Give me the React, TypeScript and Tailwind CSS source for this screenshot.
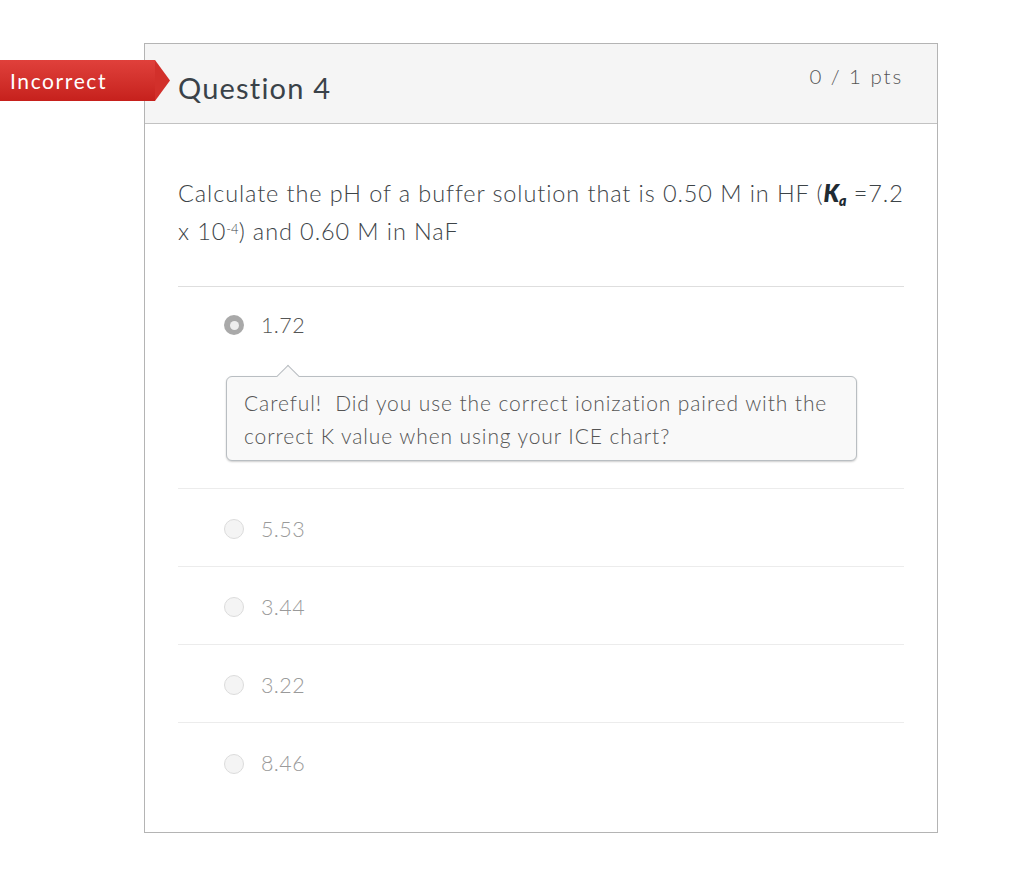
import React from 'react';

const answers = ['5.53', '3.44', '3.22', '8.46'];

const Radio = ({ selected }: { selected?: boolean }) =>
  selected ? (
    <span className="w-[20px] h-[20px] rounded-full bg-[#a9a9a9] flex items-center justify-center shrink-0">
      <span className="w-[9px] h-[9px] rounded-full bg-[#eeeeee]" />
    </span>
  ) : (
    <span className="w-[20px] h-[20px] rounded-full border border-[#dcdcdc] bg-[#f4f4f4] shrink-0" />
  );

export default function App() {
  return (
    <div className="relative w-[1024px] h-[872px] bg-white font-['Lato',sans-serif] text-[#2d3b45]">
      {/* incorrect badge */}
      <div className="absolute left-0 top-[60px] h-[41px] flex">
        <div className="w-[155px] h-full bg-gradient-to-b from-[#e0403b] to-[#c6201c] flex items-center pl-[10px] text-white text-[21px] tracking-[1.6px]">
          Incorrect
        </div>
        <svg width="16" height="41" viewBox="0 0 16 41">
          <polygon points="0,0 15,20.5 0,41" fill="#d2302b" />
        </svg>
      </div>

      <div className="pl-[144px] pt-[43px]">
        <div className="w-[794px] h-[790px] border border-[#b4b4b4]">
          <div className="h-[80px] bg-[#f5f5f5] border-b border-[#c2c2c2] flex justify-between pl-[33px] pr-[34px]">
            <div className="text-[29px] text-[#3a4249] pt-[26px] leading-[36px] tracking-[1.2px]">Question 4</div>
            <div className="text-[20.5px] text-[#555] pt-[18px] leading-[28px] tracking-[1.9px] font-light">0 / 1 pts</div>
          </div>

          <div className="px-[33px]">
            <div className="pt-[50px] pb-[36px] text-[23.5px] leading-[38px] tracking-[0.9px] font-light text-[#3d4448] border-b border-[#dedede]">
              Calculate the pH of a buffer solution that is 0.50 M in HF (
              <b className="italic font-extrabold text-[#1f2b33] tracking-normal">
                K<sub className="text-[14px] leading-none">a</sub>
              </b>{' '}
              =7.2 x 10<sup className="text-[13px] leading-none tracking-normal">-4</sup>) and 0.60 M in NaF
            </div>

            <div className="border-b border-[#ececec] pt-[24px] pb-[27px]">
              <div className="flex items-center gap-[17px] pl-[46px] text-[21.5px] text-[#555] leading-[28px] tracking-[0.4px] font-light">
                <Radio selected />
                1.72
              </div>
              <div className="relative ml-[48px] mt-[37px] w-[631px] rounded-[6px] border border-[#b9bec2] bg-[#f9f9f9] shadow-[0_1px_2px_rgba(0,0,0,0.2)] px-[17px] pt-[9px] pb-[8px] text-[21px] leading-[33px] tracking-[0.9px] font-light text-[#555]">
                <span className="absolute left-[53px] top-[-9px] w-[16px] h-[16px] rotate-45 bg-[#f9f9f9] border-l border-t border-[#b9bec2]" />
                Careful!&nbsp; Did you use the correct ionization paired with the correct K value when using your ICE chart?
              </div>
            </div>

            {answers.map((a, i) => (
              <div
                key={a}
                className={`h-[78px] flex items-center gap-[17px] pl-[46px] pt-[3px] text-[21.5px] text-[#9a9a9a] font-light tracking-[0.4px] ${
                  i < answers.length - 1 ? 'border-b border-[#ececec]' : ''
                }`}
              >
                <Radio />
                {a}
              </div>
            ))}
          </div>
        </div>
      </div>
    </div>
  );
}
